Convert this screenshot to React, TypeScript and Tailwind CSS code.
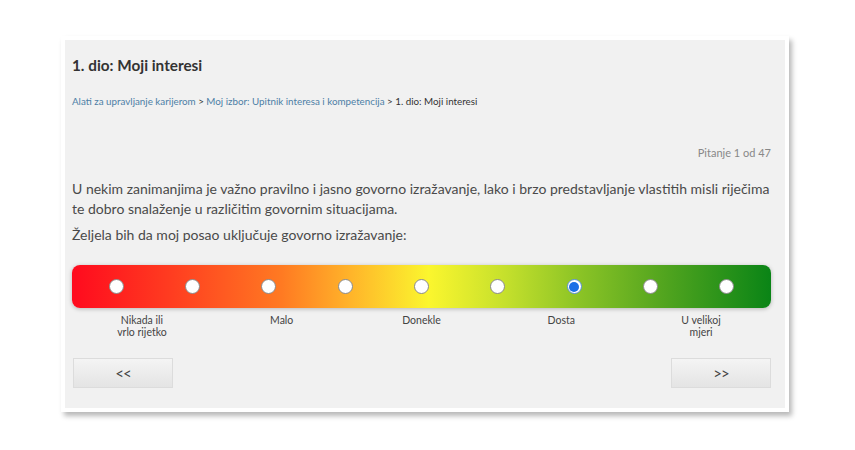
import React from "react";

const circles = [0, 1, 2, 3, 4, 5, 6, 7, 8];
const labels = [["Nikada ili", "vrlo rijetko"], ["Malo"], ["Donekle"], ["Dosta"], ["U velikoj", "mjeri"]];

export default function App() {
  return (
    <div className="w-[855px] h-[450px] bg-white pl-[61px] pt-[36px]" style={{ fontFamily: "Lato, 'Noto Sans', sans-serif" }}>
      <div className="w-[728px] border-4 border-white shadow-[3px_4px_5px_rgba(0,0,0,0.28)] bg-[#f1f1f1]">
        <div className="pl-[7px] pr-[14px] pt-[15px] pb-[20px]">
          <h1 className="text-[15.3px] leading-[20px] font-bold text-[#333]">1. dio: Moji interesi</h1>
          <div className="mt-[19px] text-[9.8px] leading-[14px] text-[#333]">
            <span className="text-[#4d7fa6]">Alati za upravljanje karijerom</span>
            <span> &gt; </span>
            <span className="text-[#4d7fa6]">Moj izbor: Upitnik interesa i kompetencija</span>
            <span> &gt; 1. dio: Moji interesi</span>
          </div>
          <div className="mt-[37px] text-right text-[11px] leading-[16px] text-[#888]">Pitanje 1 od 47</div>
          <p className="mt-[18px] text-[14px] leading-[20px] text-[#4a4a4a]">
            U nekim zanimanjima je važno pravilno i jasno govorno izražavanje, lako i brzo predstavljanje vlastitih misli riječima te dobro snalaženje u različitim govornim situacijama.
          </p>
          <p className="mt-[6px] text-[14px] leading-[20px] text-[#4a4a4a]">Željela bih da moj posao uključuje govorno izražavanje:</p>
          <div className="mt-[20px] h-[43px] rounded-[8px] flex items-center px-[6px] shadow-[0_1px_4px_rgba(0,0,0,0.25)] bg-[linear-gradient(to_right,#ff0a1e_0%,#ff3c20_14%,#ff7a22_30%,#ffb52a_40%,#fbf62e_51%,#c5e02c_62%,#8ec526_72%,#55a61f_84%,#0a8416_100%)]">
            {circles.map((i) => (
              <div key={i} className="flex-1 flex justify-center">
                {i === 6 ? (
                  <div className="w-[15px] h-[15px] rounded-full bg-white border border-[#5a8fd8] flex items-center justify-center">
                    <div className="w-[10px] h-[10px] rounded-full bg-[#1a6fe6]" />
                  </div>
                ) : (
                  <div className="w-[15px] h-[15px] rounded-full bg-white border border-[#8a8a8a]" />
                )}
              </div>
            ))}
          </div>
          <div className="mt-[6px] flex">
            {labels.map((l, i) => (
              <div key={i} className="flex-1 text-center text-[10.5px] leading-[12px] text-[#444]">
                {l.map((t, j) => (
                  <div key={j}>{t}</div>
                ))}
              </div>
            ))}
          </div>
          <div className="mt-[20px] flex justify-between pl-[1px]">
            <button className="w-[100px] h-[30px] border border-[#dcdcdc] bg-[linear-gradient(to_bottom,#f4f4f4,#e4e4e4)] text-[15px] tracking-[-1px] text-[#444]">&lt;&lt;</button>
            <button className="w-[100px] h-[30px] border border-[#dcdcdc] bg-[linear-gradient(to_bottom,#f4f4f4,#e4e4e4)] text-[15px] tracking-[-1px] text-[#444]">&gt;&gt;</button>
          </div>
        </div>
      </div>
    </div>
  );
}
